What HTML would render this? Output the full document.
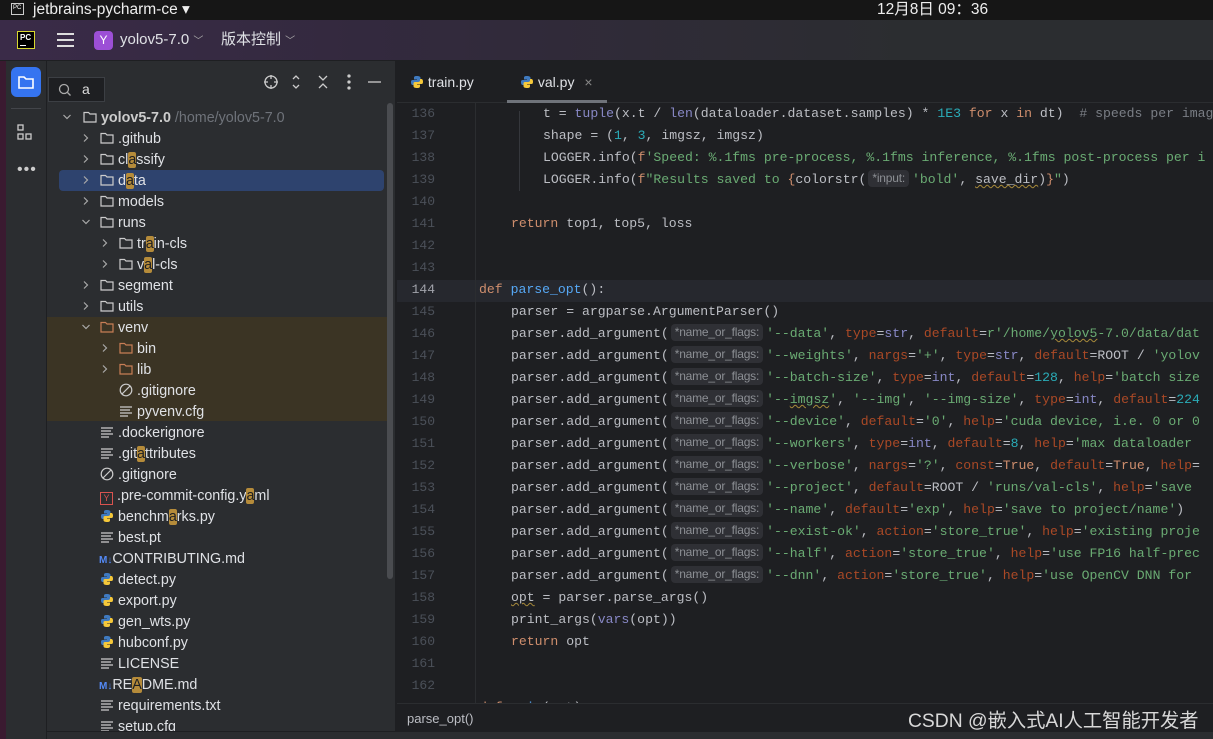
<!DOCTYPE html>
<html><head><meta charset="utf-8"><style>
*{margin:0;padding:0;box-sizing:border-box}
body{width:1213px;height:739px;overflow:hidden;background:#1e1f22;font-family:"Liberation Sans","Noto Sans CJK SC",sans-serif;position:relative}
.a{position:absolute}
#top{left:0;top:0;width:1213px;height:20px;background:#161616;color:#eee;font-size:15.5px}
#title{left:0;top:20px;width:1213px;height:41px;background:linear-gradient(90deg,#3a2b48 0%,#33293e 30%,#2b2d30 75%);border-bottom:1px solid #1e1f22}
#dock{left:0;top:20px;width:6px;height:719px;background:#3a1a30}
#strip{left:6px;top:61px;width:41px;height:678px;background:#2b2d30;border-right:1px solid #1e1f22}
#proj{left:47px;top:61px;width:349px;height:670px;background:#2b2d30;border-right:1px solid #1e1f22}
.row{position:absolute;height:21px;line-height:22px;font-size:14.3px;color:#dfe1e5;white-space:nowrap}
.hl{background:#b58b3a;color:#1e1f22;border-radius:2px}
#ed{left:397px;top:61px;width:816px;height:642px;background:#1e1f22}
.ln{position:absolute;left:397px;width:38px;text-align:right;font-family:"Liberation Mono",monospace;font-size:13px;color:#4b5059;height:22px;line-height:22px}
.cl{position:absolute;left:479px;font-family:"Liberation Mono",monospace;font-size:13.15px;color:#bcbec4;white-space:pre;height:22px;line-height:22px}
.k{color:#cf8e6d}.s{color:#6aab73}.n{color:#2aacb8}.c{color:#7a7e85}.b{color:#8888c6}.p{color:#aa4926}.f{color:#56a8f5}
.h{display:inline-block;background:#2f3035;color:#8c8f94;font-family:"Liberation Sans",sans-serif;font-size:12px;line-height:17px;padding:0 4px;border-radius:4px;margin:0 3px 0 2px;vertical-align:1px;letter-spacing:-0.2px}
.u{text-decoration:underline wavy #a88a3a;text-decoration-thickness:1px}
</style></head><body>
<div id="top" class="a"><span class="a" style="left:11px;top:3px;width:13px;height:12px;border:1.5px solid #ccc;font-size:6px;line-height:8px;color:#fff;padding-left:1px">PC</span><span class="a" style="left:33px;top:0;line-height:19px">jetbrains-pycharm-ce ▾</span><span class="a" style="left:877px;top:0;line-height:19px">12月8日 09：36</span></div>
<div id="dock" class="a"></div>
<div id="title" class="a">
 <div class="a" style="left:17px;top:11px;width:18px;height:18px;background:#000;border:1px solid #d8d830;color:#fff;font-size:8px;font-weight:bold;padding:1px 2px">PC<div style="width:6px;height:1px;background:#fff;margin-top:3px"></div></div>
 <div class="a" style="left:57px;top:13px;width:17px;height:2px;background:#ddd;box-shadow:0 6px 0 #ddd,0 12px 0 #ddd"></div>
 <div class="a" style="left:94px;top:11px;width:19px;height:19px;background:#9c4fd6;border-radius:4px;color:#fff;font-size:12px;text-align:center;line-height:19px">Y</div>
 <div class="a" style="left:120px;top:10px;color:#dfe1e5;font-size:15px;line-height:20px">yolov5-7.0 <span style="font-size:10px;color:#aaa">﹀</span></div>
 <div class="a" style="left:221px;top:10px;color:#dfe1e5;font-size:15px;line-height:20px">版本控制 <span style="font-size:10px;color:#aaa">﹀</span></div>
</div>
<div id="strip" class="a">
 <div class="a" style="left:5px;top:6px;width:30px;height:30px;background:#3574f0;border-radius:6px"><svg width="30" height="30"><path d="M8 10h5l2 2h7v9H8z" fill="none" stroke="#fff" stroke-width="1.6"/></svg></div>
 <div class="a" style="left:5px;top:47px;width:30px;height:1px;background:#43454a"></div>
 <svg class="a" style="left:10px;top:62px" width="20" height="20"><rect x="2" y="2" width="5" height="5" fill="none" stroke="#ccc" stroke-width="1.3"/><rect x="2" y="11" width="5" height="5" fill="none" stroke="#ccc" stroke-width="1.3"/><rect x="10" y="11" width="5" height="5" fill="none" stroke="#ccc" stroke-width="1.3"/></svg>
 <div class="a" style="left:11px;top:100px;color:#ccc;font-size:16px;letter-spacing:1px">•••</div>
</div>
<div id="proj" class="a">
 <div class="a" style="left:1px;top:16px;width:57px;height:25px;background:#1e1f22;border:1px solid #3c3f44"><svg class="a" style="left:9px;top:5px" width="14" height="14"><circle cx="6" cy="6" r="4.5" fill="none" stroke="#aaa" stroke-width="1.3"/><path d="M9.5 9.5l3 3" stroke="#aaa" stroke-width="1.3"/></svg><span class="a" style="left:33px;top:3px;color:#ddd;font-size:14px">a</span></div>
 <svg class="a" style="left:215px;top:12px" width="120" height="18" fill="none" stroke="#ccc" stroke-width="1.3"><circle cx="9" cy="9" r="6"/><path d="M9 2v4M9 12v4M2 9h4M12 9h4"/><path d="M31 6l3-3 3 3M31 12l3 3 3-3"/><path d="M57 3l4 4 4-4M57 15l4-4 4 4"/><circle cx="87" cy="3" r="1" fill="#ccc"/><circle cx="87" cy="9" r="1" fill="#ccc"/><circle cx="87" cy="15" r="1" fill="#ccc"/><path d="M106 9h13"/></svg>
 <div class="a" style="left:12px;top:109px;width:325px;height:21px;background:#2e436e;border-radius:4px"></div>
 <div class="a" style="left:0;top:256px;width:340px;height:104px;background:#3b3424"></div>
 <div class="a" style="left:340px;top:42px;width:6px;height:476px;background:#4a4c50;border-radius:3px"></div>
</div>
<div class="a" style="left:47px;top:731px;width:1166px;height:8px;background:#2b2d30;border-top:1px solid #1e1f22"></div>

<svg width="0" height="0" style="position:absolute"><defs>
<symbol id="fo" viewBox="0 0 14 14"><path d="M1 2.5h4.5l1.5 1.5h6v8H1z" fill="none" stroke="currentColor" stroke-width="1.2"/></symbol>
<symbol id="py" viewBox="0 0 14 14"><path d="M7 1C4 1 4 2 4 3v1.5h3V5H2.5C1 5 1 6.5 1 7.5S1.5 10 2.5 10H4V8.5C4 7.5 5 7 6 7h3c1 0 1.5-.5 1.5-1.5V3C10.5 1.5 9 1 7 1z" fill="#3f7ac0"/><path d="M7 13c3 0 3-1 3-2V9.5H7V9h4.5c1.5 0 1.5-1.5 1.5-2.5S12.5 4 11.5 4H10v1.5c0 1-1 1.5-2 1.5H5c-1 0-1.5.5-1.5 1.5V11C3.5 12.5 5 13 7 13z" fill="#f5c83a"/></symbol>
<symbol id="tx" viewBox="0 0 14 14"><path d="M1 3h12M1 6h10M1 9h12M1 12h8" stroke="#ccc" stroke-width="1.2"/></symbol>
<symbol id="gi" viewBox="0 0 14 14"><circle cx="7" cy="7" r="5.8" fill="none" stroke="#ccc" stroke-width="1.2"/><path d="M3 11l8-8" stroke="#ccc" stroke-width="1.2"/></symbol>
<symbol id="ch" viewBox="0 0 10 10"><path d="M3 1.5l3.5 3.5L3 8.5" fill="none" stroke="#aaa" stroke-width="1.2"/></symbol>
<symbol id="cd" viewBox="0 0 10 10"><path d="M1.5 3l3.5 3.5L8.5 3" fill="none" stroke="#aaa" stroke-width="1.2"/></symbol>
</defs></svg>

<div class="row" style="left:62px;top:107px"><svg width="10" height="10"><use href="#cd"/></svg></div>
<div class="row" style="left:83px;top:107px;color:#ccc"><svg width="14" height="14" style="vertical-align:-2px;color:#ccc"><use href="#fo"/></svg> <b>yolov5-7.0</b> <span style="color:#6f737a">/home/yolov5-7.0</span></div>

<div class="row" style="left:81px;top:128px"><svg width="10" height="10"><use href="#ch"/></svg></div>
<div class="row" style="left:100px;top:128px"><svg width="14" height="14" style="vertical-align:-2px;color:#ccc"><use href="#fo"/></svg> .github</div>
<div class="row" style="left:81px;top:149px"><svg width="10" height="10"><use href="#ch"/></svg></div>
<div class="row" style="left:100px;top:149px"><svg width="14" height="14" style="vertical-align:-2px;color:#ccc"><use href="#fo"/></svg> cl<span class="hl">a</span>ssify</div>
<div class="row" style="left:81px;top:170px"><svg width="10" height="10"><use href="#ch"/></svg></div>
<div class="row" style="left:100px;top:170px"><svg width="14" height="14" style="vertical-align:-2px;color:#ccc"><use href="#fo"/></svg> d<span class="hl">a</span>ta</div>
<div class="row" style="left:81px;top:191px"><svg width="10" height="10"><use href="#ch"/></svg></div>
<div class="row" style="left:100px;top:191px"><svg width="14" height="14" style="vertical-align:-2px;color:#ccc"><use href="#fo"/></svg> models</div>
<div class="row" style="left:81px;top:212px"><svg width="10" height="10"><use href="#cd"/></svg></div>
<div class="row" style="left:100px;top:212px"><svg width="14" height="14" style="vertical-align:-2px;color:#ccc"><use href="#fo"/></svg> runs</div>
<div class="row" style="left:100px;top:233px"><svg width="10" height="10"><use href="#ch"/></svg></div>
<div class="row" style="left:119px;top:233px"><svg width="14" height="14" style="vertical-align:-2px;color:#ccc"><use href="#fo"/></svg> tr<span class="hl">a</span>in-cls</div>
<div class="row" style="left:100px;top:254px"><svg width="10" height="10"><use href="#ch"/></svg></div>
<div class="row" style="left:119px;top:254px"><svg width="14" height="14" style="vertical-align:-2px;color:#ccc"><use href="#fo"/></svg> v<span class="hl">a</span>l-cls</div>
<div class="row" style="left:81px;top:275px"><svg width="10" height="10"><use href="#ch"/></svg></div>
<div class="row" style="left:100px;top:275px"><svg width="14" height="14" style="vertical-align:-2px;color:#ccc"><use href="#fo"/></svg> segment</div>
<div class="row" style="left:81px;top:296px"><svg width="10" height="10"><use href="#ch"/></svg></div>
<div class="row" style="left:100px;top:296px"><svg width="14" height="14" style="vertical-align:-2px;color:#ccc"><use href="#fo"/></svg> utils</div>
<div class="row" style="left:81px;top:317px"><svg width="10" height="10"><use href="#cd"/></svg></div>
<div class="row" style="left:100px;top:317px"><svg width="14" height="14" style="vertical-align:-2px;color:#c77d55"><use href="#fo"/></svg> venv</div>
<div class="row" style="left:100px;top:338px"><svg width="10" height="10"><use href="#ch"/></svg></div>
<div class="row" style="left:119px;top:338px"><svg width="14" height="14" style="vertical-align:-2px;color:#c77d55"><use href="#fo"/></svg> bin</div>
<div class="row" style="left:100px;top:359px"><svg width="10" height="10"><use href="#ch"/></svg></div>
<div class="row" style="left:119px;top:359px"><svg width="14" height="14" style="vertical-align:-2px;color:#c77d55"><use href="#fo"/></svg> lib</div>
<div class="row" style="left:119px;top:380px"><svg width="14" height="14" style="vertical-align:-2px"><use href="#gi"/></svg> .gitignore</div>
<div class="row" style="left:119px;top:401px"><svg width="14" height="14" style="vertical-align:-2px"><use href="#tx"/></svg> pyvenv.cfg</div>
<div class="row" style="left:100px;top:422px"><svg width="14" height="14" style="vertical-align:-2px"><use href="#tx"/></svg> .dockerignore</div>
<div class="row" style="left:100px;top:443px"><svg width="14" height="14" style="vertical-align:-2px"><use href="#tx"/></svg> .git<span class="hl">a</span>ttributes</div>
<div class="row" style="left:100px;top:464px"><svg width="14" height="14" style="vertical-align:-2px"><use href="#gi"/></svg> .gitignore</div>
<div class="row" style="left:100px;top:485px"><span style="display:inline-block;width:13px;height:13px;border:1.2px solid #d9534f;color:#d9534f;font-size:9px;line-height:11px;text-align:center;vertical-align:-1px">Y</span> .pre-commit-config.y<span class="hl">a</span>ml</div>
<div class="row" style="left:100px;top:506px"><svg width="14" height="14" style="vertical-align:-2px"><use href="#py"/></svg> benchm<span class="hl">a</span>rks.py</div>
<div class="row" style="left:100px;top:527px"><svg width="14" height="14" style="vertical-align:-2px"><use href="#tx"/></svg> best.pt</div>
<div class="row" style="left:99px;top:548px"><span style="color:#548af7;font-size:10px;font-weight:bold">M↓</span>CONTRIBUTING.md</div>
<div class="row" style="left:100px;top:569px"><svg width="14" height="14" style="vertical-align:-2px"><use href="#py"/></svg> detect.py</div>
<div class="row" style="left:100px;top:590px"><svg width="14" height="14" style="vertical-align:-2px"><use href="#py"/></svg> export.py</div>
<div class="row" style="left:100px;top:611px"><svg width="14" height="14" style="vertical-align:-2px"><use href="#py"/></svg> gen_wts.py</div>
<div class="row" style="left:100px;top:632px"><svg width="14" height="14" style="vertical-align:-2px"><use href="#py"/></svg> hubconf.py</div>
<div class="row" style="left:100px;top:653px"><svg width="14" height="14" style="vertical-align:-2px"><use href="#tx"/></svg> LICENSE</div>
<div class="row" style="left:99px;top:674px"><span style="color:#548af7;font-size:10px;font-weight:bold">M↓</span>RE<span class="hl">A</span>DME.md</div>
<div class="row" style="left:100px;top:695px"><svg width="14" height="14" style="vertical-align:-2px"><use href="#tx"/></svg> requirements.txt</div>
<div class="row" style="left:100px;top:716px;height:15px;overflow:hidden"><svg width="14" height="14" style="vertical-align:-2px"><use href="#tx"/></svg> setup.cfg</div>

<div id="ed" class="a">
 <div class="a" style="left:0;top:0;width:816px;height:42px;border-bottom:1px solid #2b2d30"></div>
 <div class="a" style="left:110px;top:39px;width:100px;height:3px;background:#6f737a"></div>
 <div class="a" style="left:0;top:219px;width:816px;height:22px;background:#26282e"></div>
 <div class="a" style="left:78px;top:42px;width:1px;height:600px;background:#2b2d30"></div>
 <div class="a" style="left:122px;top:50px;width:1px;height:80px;background:#35373c"></div>
</div>
<div class="a" style="left:410px;top:74px;font-size:14px;color:#dfe1e5"><svg width="14" height="14" style="vertical-align:-2px"><use href="#py"/></svg> train.py</div>
<div class="a" style="left:520px;top:74px;font-size:14px;color:#dfe1e5"><svg width="14" height="14" style="vertical-align:-2px"><use href="#py"/></svg> val.py <span style="color:#888;margin-left:6px">×</span></div>

<div class="ln" style="top:103px">136</div><div class="cl" style="top:103px;left:543px">t = <span class="b">tuple</span>(x.t / <span class="b">len</span>(dataloader.dataset.samples) * <span class="n">1E3</span> <span class="k">for</span> x <span class="k">in</span> dt)  <span class="c"># speeds per image</span></div>
<div class="ln" style="top:125px">137</div><div class="cl" style="top:125px;left:543px">shape = (<span class="n">1</span>, <span class="n">3</span>, imgsz, imgsz)</div>
<div class="ln" style="top:147px">138</div><div class="cl" style="top:147px;left:543px">LOGGER.info(<span class="k">f</span><span class="s">'Speed: %.1fms pre-process, %.1fms inference, %.1fms post-process per i</span></div>
<div class="ln" style="top:169px">139</div><div class="cl" style="top:169px;left:543px">LOGGER.info(<span class="k">f</span><span class="s">"Results saved to </span><span class="k">{</span>colorstr(<span class="h">*input:</span><span class="s">'bold'</span>, <span class="u">save_dir</span>)<span class="k">}</span><span class="s">"</span>)</div>
<div class="ln" style="top:191px">140</div>
<div class="ln" style="top:213px">141</div><div class="cl" style="top:213px;left:511px"><span class="k">return</span> top1, top5, loss</div>
<div class="ln" style="top:235px">142</div>
<div class="ln" style="top:257px">143</div>
<div class="ln" style="top:279px;color:#a1a3ab">144</div><div class="cl" style="top:279px"><span class="k">def</span> <span class="f">parse_opt</span>():</div>
<div class="ln" style="top:301px">145</div><div class="cl" style="top:301px;left:511px">parser = argparse.ArgumentParser()</div>
<div class="ln" style="top:323px">146</div><div class="cl" style="top:323px;left:511px">parser.add_argument(<span class="h">*name_or_flags:</span><span class="s">'--data'</span>, <span class="p">type</span>=<span class="b">str</span>, <span class="p">default</span>=<span class="s">r'/home/<span class="u">yolov5</span>-7.0/data/dat</span></div>
<div class="ln" style="top:345px">147</div><div class="cl" style="top:345px;left:511px">parser.add_argument(<span class="h">*name_or_flags:</span><span class="s">'--weights'</span>, <span class="p">nargs</span>=<span class="s">'+'</span>, <span class="p">type</span>=<span class="b">str</span>, <span class="p">default</span>=ROOT / <span class="s">'yolov</span></div>
<div class="ln" style="top:367px">148</div><div class="cl" style="top:367px;left:511px">parser.add_argument(<span class="h">*name_or_flags:</span><span class="s">'--batch-size'</span>, <span class="p">type</span>=<span class="b">int</span>, <span class="p">default</span>=<span class="n">128</span>, <span class="p">help</span>=<span class="s">'batch size</span></div>
<div class="ln" style="top:389px">149</div><div class="cl" style="top:389px;left:511px">parser.add_argument(<span class="h">*name_or_flags:</span><span class="s">'--<span class="u">imgsz</span>'</span>, <span class="s">'--img'</span>, <span class="s">'--img-size'</span>, <span class="p">type</span>=<span class="b">int</span>, <span class="p">default</span>=<span class="n">224</span></div>
<div class="ln" style="top:411px">150</div><div class="cl" style="top:411px;left:511px">parser.add_argument(<span class="h">*name_or_flags:</span><span class="s">'--device'</span>, <span class="p">default</span>=<span class="s">'0'</span>, <span class="p">help</span>=<span class="s">'cuda device, i.e. 0 or 0</span></div>
<div class="ln" style="top:433px">151</div><div class="cl" style="top:433px;left:511px">parser.add_argument(<span class="h">*name_or_flags:</span><span class="s">'--workers'</span>, <span class="p">type</span>=<span class="b">int</span>, <span class="p">default</span>=<span class="n">8</span>, <span class="p">help</span>=<span class="s">'max dataloader </span></div>
<div class="ln" style="top:455px">152</div><div class="cl" style="top:455px;left:511px">parser.add_argument(<span class="h">*name_or_flags:</span><span class="s">'--verbose'</span>, <span class="p">nargs</span>=<span class="s">'?'</span>, <span class="p">const</span>=<span class="k">True</span>, <span class="p">default</span>=<span class="k">True</span>, <span class="p">help</span>=</div>
<div class="ln" style="top:477px">153</div><div class="cl" style="top:477px;left:511px">parser.add_argument(<span class="h">*name_or_flags:</span><span class="s">'--project'</span>, <span class="p">default</span>=ROOT / <span class="s">'runs/val-cls'</span>, <span class="p">help</span>=<span class="s">'save </span></div>
<div class="ln" style="top:499px">154</div><div class="cl" style="top:499px;left:511px">parser.add_argument(<span class="h">*name_or_flags:</span><span class="s">'--name'</span>, <span class="p">default</span>=<span class="s">'exp'</span>, <span class="p">help</span>=<span class="s">'save to project/name'</span>)</div>
<div class="ln" style="top:521px">155</div><div class="cl" style="top:521px;left:511px">parser.add_argument(<span class="h">*name_or_flags:</span><span class="s">'--exist-ok'</span>, <span class="p">action</span>=<span class="s">'store_true'</span>, <span class="p">help</span>=<span class="s">'existing proje</span></div>
<div class="ln" style="top:543px">156</div><div class="cl" style="top:543px;left:511px">parser.add_argument(<span class="h">*name_or_flags:</span><span class="s">'--half'</span>, <span class="p">action</span>=<span class="s">'store_true'</span>, <span class="p">help</span>=<span class="s">'use FP16 half-prec</span></div>
<div class="ln" style="top:565px">157</div><div class="cl" style="top:565px;left:511px">parser.add_argument(<span class="h">*name_or_flags:</span><span class="s">'--dnn'</span>, <span class="p">action</span>=<span class="s">'store_true'</span>, <span class="p">help</span>=<span class="s">'use OpenCV DNN for </span></div>
<div class="ln" style="top:587px">158</div><div class="cl" style="top:587px;left:511px"><span class="u">opt</span> = parser.parse_args()</div>
<div class="ln" style="top:609px">159</div><div class="cl" style="top:609px;left:511px">print_args(<span class="b">vars</span>(opt))</div>
<div class="ln" style="top:631px">160</div><div class="cl" style="top:631px;left:511px"><span class="k">return</span> opt</div>
<div class="ln" style="top:653px">161</div>
<div class="ln" style="top:675px">162</div>
<div class="cl" style="top:697px;height:6px;overflow:hidden"><span class="k">def</span> <span class="f">main</span>(opt):</div>
<div class="a" style="left:397px;top:703px;width:816px;height:28px;background:#1e1f22;border-top:1px solid #2b2d30"></div>
<div class="a" style="left:407px;top:711px;font-size:13px;color:#bcbec4">parse_opt()</div>
<div class="a" style="left:908px;top:705px;font-size:19.3px;color:#d8d8d8">CSDN @嵌入式AI人工智能开发者</div>
</body></html>
